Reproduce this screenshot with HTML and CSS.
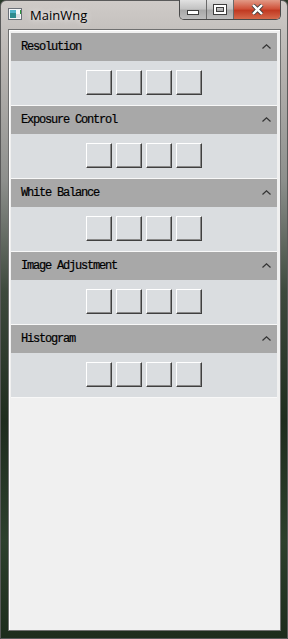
FILE: index.html
```html
<!DOCTYPE html>
<html lang="en">
<head>
    <meta charset="UTF-8">
    <meta name="viewport" content="width=device-width, initial-scale=1.0">
    <title>MainWng</title>
    <link rel="stylesheet" href="styles.css">
</head>
<body>

<div class="window">

    <div class="titlebar">
        <svg class="app-icon" width="15" height="13" viewBox="0 0 15 13">
            <rect x="0.5" y="0.5" width="13" height="11" fill="#f4f6f8" stroke="#6b7078"/>
            <rect x="2" y="2" width="6" height="8" fill="#2d8a8e"/>
            <rect x="2" y="2" width="6" height="3" fill="#4fb2c9"/>
            <rect x="8" y="6" width="4" height="4" fill="#d8dde2"/>
            <rect x="12" y="2" width="1" height="4" fill="#2f9a3c"/>
        </svg>
        <span class="title">MainWng</span>
        <div class="caption-buttons">
            <div class="cap-btn cap-min"><span class="min-glyph"></span></div>
            <div class="cap-btn cap-max"><span class="max-glyph"></span></div>
            <div class="cap-btn cap-close">
                <svg width="13" height="11" viewBox="0 0 13 11">
                    <path d="M2 1 L11 10 M11 1 L2 10" stroke="#3a3a3a" stroke-width="4"/>
                    <path d="M2 1 L11 10 M11 1 L2 10" stroke="#fff" stroke-width="2.4"/>
                </svg>
            </div>
        </div>
    </div>

    <div class="client">

        <div class="section">
            <div class="section-head">
                <span>Resolution</span>
                <svg class="chevron" width="9" height="5" viewBox="0 0 9 5"><path d="M0.5 4.5 L4.5 0.8 L8.5 4.5" fill="none" stroke="#333" stroke-width="1.2"/></svg>
            </div>
            <div class="section-body">
                <button class="tool"></button>
                <button class="tool"></button>
                <button class="tool"></button>
                <button class="tool"></button>
            </div>
        </div>

        <div class="section">
            <div class="section-head">
                <span>Exposure Control</span>
                <svg class="chevron" width="9" height="5" viewBox="0 0 9 5"><path d="M0.5 4.5 L4.5 0.8 L8.5 4.5" fill="none" stroke="#333" stroke-width="1.2"/></svg>
            </div>
            <div class="section-body">
                <button class="tool"></button>
                <button class="tool"></button>
                <button class="tool"></button>
                <button class="tool"></button>
            </div>
        </div>

        <div class="section">
            <div class="section-head">
                <span>White Balance</span>
                <svg class="chevron" width="9" height="5" viewBox="0 0 9 5"><path d="M0.5 4.5 L4.5 0.8 L8.5 4.5" fill="none" stroke="#333" stroke-width="1.2"/></svg>
            </div>
            <div class="section-body">
                <button class="tool"></button>
                <button class="tool"></button>
                <button class="tool"></button>
                <button class="tool"></button>
            </div>
        </div>

        <div class="section">
            <div class="section-head">
                <span>Image Adjustment</span>
                <svg class="chevron" width="9" height="5" viewBox="0 0 9 5"><path d="M0.5 4.5 L4.5 0.8 L8.5 4.5" fill="none" stroke="#333" stroke-width="1.2"/></svg>
            </div>
            <div class="section-body">
                <button class="tool"></button>
                <button class="tool"></button>
                <button class="tool"></button>
                <button class="tool"></button>
            </div>
        </div>

        <div class="section">
            <div class="section-head">
                <span>Histogram</span>
                <svg class="chevron" width="9" height="5" viewBox="0 0 9 5"><path d="M0.5 4.5 L4.5 0.8 L8.5 4.5" fill="none" stroke="#333" stroke-width="1.2"/></svg>
            </div>
            <div class="section-body">
                <button class="tool"></button>
                <button class="tool"></button>
                <button class="tool"></button>
                <button class="tool"></button>
            </div>
        </div>

    </div>
</div>

</body>
</html>
```

FILE: styles.css
```css
html, body {
    margin: 0;
    padding: 0;
    background-color: #2a3a2a;
}
.window {
    width: 288px;
    height: 639px;
    box-sizing: border-box;
    padding: 0 6px 7px 7px;
    display: flex;
    flex-direction: column;
    border-radius: 6px 6px 0 0;
    border: 1px solid #5a5a5a;
    background: linear-gradient(to bottom, #cfcbc8 0px, #b9b5b2 60px, #8d8f8c 180px, #3e4a3d 290px, #1f2d1e 420px, #2d402c 540px, #1d2c1c 639px);
}
.titlebar {
    height: 28px;
    display: flex;
    align-items: flex-start;
    position: relative;
    flex-shrink: 0;
}
.app-icon {
    margin-top: 7px;
    margin-left: 0;
}
.title {
    font-family: "Open Sans", "Noto Sans", sans-serif;
    font-size: 13px;
    color: #000;
    margin-left: 7px;
    margin-top: 5px;
    text-shadow: 0 0 6px rgba(255, 255, 255, 0.8);
}
.caption-buttons {
    position: absolute;
    top: -1px;
    right: 0;
    display: flex;
    height: 19px;
    border: 1px solid #4a4a4a;
    border-top: none;
    border-radius: 0 0 5px 5px;
    overflow: hidden;
}
.cap-btn {
    display: flex;
    align-items: center;
    justify-content: center;
    height: 19px;
    box-sizing: border-box;
}
.cap-min, .cap-max {
    width: 27px;
    background: linear-gradient(to bottom, #e1e1e1 0%, #c4c4c4 45%, #a9a9a9 55%, #bdbdbd 100%);
    border-right: 1px solid #6a6a6a;
}
.cap-close {
    width: 46px;
    background: linear-gradient(to bottom, #e29a86 0%, #d0543c 45%, #c13a22 55%, #d56a4c 100%);
}
.min-glyph {
    width: 10px;
    height: 3px;
    margin-top: 6px;
    background: #fff;
    border: 1px solid #3d3d3d;
}
.max-glyph {
    width: 8px;
    height: 5px;
    border: 2px solid #fff;
    outline: 1px solid #3d3d3d;
    box-shadow: inset 0 0 0 1px #3d3d3d;
}
.client {
    flex: 1;
    background-color: #f0f0f0;
    border: 1px solid #707070;
    box-shadow: inset 1px 1px 0 #fff;
    padding: 3px 3px 0 2px;
}
.section {
    border-bottom: 1px solid #f8f8f8;
}
.section-head {
    height: 28px;
    background-color: #a8a8a8;
    display: flex;
    align-items: center;
    justify-content: space-between;
    padding: 0 6px 0 10px;
    font-family: "Liberation Mono", monospace;
    font-size: 12px;
    letter-spacing: -1.2px;
    color: #000;
    -webkit-text-stroke: 0.2px #000;
}
.chevron {
    margin-bottom: 1px;
}
.section-body {
    height: 44px;
    box-sizing: border-box;
    background-color: #dadde0;
    padding-top: 9px;
    display: flex;
    justify-content: center;
    gap: 4px;
}
.tool {
    width: 26px;
    height: 25px;
    padding: 0;
    background-color: #dadde0;
    border-top: 1px solid #fff;
    border-left: 1px solid #fff;
    border-right: 1px solid #404040;
    border-bottom: 1px solid #404040;
    box-shadow: inset -1px -1px 0 #8a8a8a;
}
```
